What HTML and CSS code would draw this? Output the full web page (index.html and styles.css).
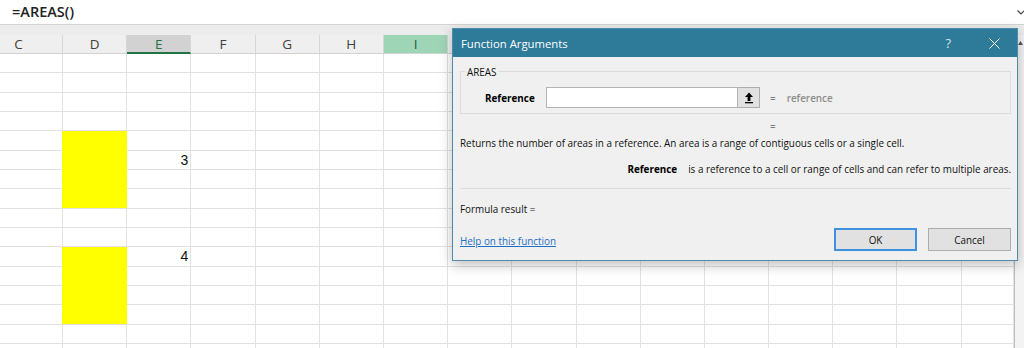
FILE: index.html
```html
<!DOCTYPE html>
<html lang="en">
<head>
<meta charset="utf-8">
<title>Function Arguments</title>
<link rel="stylesheet" href="styles.css">
</head>
<body>
<div class="app">
  <div class="fbar">
    <span class="formula">=AREAS()</span>
    <svg class="chev" viewBox="0 0 8 5" width="8" height="5"><polyline points="0.5,0.5 4,4 7.5,0.5" fill="none" stroke="#444" stroke-width="1.2"/></svg>
  </div>
  <div class="gap"></div>
  <div class="main">
    <div class="sheet">
      <div class="hd first">C</div><div class="hd">D</div><div class="hd sel">E</div><div class="hd">F</div><div class="hd">G</div><div class="hd">H</div><div class="hd act">I</div><div class="hd"></div><div class="hd"></div><div class="hd"></div><div class="hd"></div><div class="hd"></div><div class="hd"></div><div class="hd"></div><div class="hd"></div><div class="hd"></div>
      <i></i><i></i><i></i><i></i><i></i><i></i><i></i><i></i><i></i><i></i><i></i><i></i><i></i><i></i><i></i><i></i>
      <i></i><i></i><i></i><i></i><i></i><i></i><i></i><i></i><i></i><i></i><i></i><i></i><i></i><i></i><i></i><i></i>
      <i></i><i></i><i></i><i></i><i></i><i></i><i></i><i></i><i></i><i></i><i></i><i></i><i></i><i></i><i></i><i></i>
      <i></i><i></i><i></i><i></i><i></i><i></i><i></i><i></i><i></i><i></i><i></i><i></i><i></i><i></i><i></i><i></i>
      <i class="yl"></i><i class="y"></i><i></i><i></i><i></i><i></i><i></i><i></i><i></i><i></i><i></i><i></i><i></i><i></i><i></i><i></i>
      <i class="yl"></i><i class="y"></i><i class="n">3</i><i></i><i></i><i></i><i></i><i></i><i></i><i></i><i></i><i></i><i></i><i></i><i></i><i></i>
      <i class="yl"></i><i class="y"></i><i></i><i></i><i></i><i></i><i></i><i></i><i></i><i></i><i></i><i></i><i></i><i></i><i></i><i></i>
      <i class="yl"></i><i class="y yb"></i><i></i><i></i><i></i><i></i><i></i><i></i><i></i><i></i><i></i><i></i><i></i><i></i><i></i><i></i>
      <i></i><i></i><i></i><i></i><i></i><i></i><i></i><i></i><i></i><i></i><i></i><i></i><i></i><i></i><i></i><i></i>
      <i></i><i></i><i></i><i></i><i></i><i></i><i></i><i></i><i></i><i></i><i></i><i></i><i></i><i></i><i></i><i></i>
      <i class="yl"></i><i class="y"></i><i class="n">4</i><i></i><i></i><i></i><i></i><i></i><i></i><i></i><i></i><i></i><i></i><i></i><i></i><i></i>
      <i class="yl"></i><i class="y"></i><i></i><i></i><i></i><i></i><i></i><i></i><i></i><i></i><i></i><i></i><i></i><i></i><i></i><i></i>
      <i class="yl"></i><i class="y"></i><i></i><i></i><i></i><i></i><i></i><i></i><i></i><i></i><i></i><i></i><i></i><i></i><i></i><i></i>
      <i class="yl"></i><i class="y yb"></i><i></i><i></i><i></i><i></i><i></i><i></i><i></i><i></i><i></i><i></i><i></i><i></i><i></i><i></i>
      <i></i><i></i><i></i><i></i><i></i><i></i><i></i><i></i><i></i><i></i><i></i><i></i><i></i><i></i><i></i><i></i>
      <i></i><i></i><i></i><i></i><i></i><i></i><i></i><i></i><i></i><i></i><i></i><i></i><i></i><i></i><i></i><i></i>
    </div>
    <div class="vscroll">
      <svg class="uparrow" viewBox="0 0 5 4" width="5" height="4"><polygon points="2.5,0 5,4 0,4" fill="#555"/></svg>
    </div>
  </div>

  <div class="dialog">
    <div class="dtitle">
      <span class="dtext">Function Arguments</span>
      <span class="help">?</span>
      <svg class="close" viewBox="0 0 11 11" width="11" height="11"><path d="M0.5 0.5 L10.5 10.5 M10.5 0.5 L0.5 10.5" stroke="#fff" stroke-width="1" fill="none"/></svg>
    </div>
    <div class="dbody">
      <fieldset class="group">
        <legend>AREAS</legend>
        <div class="argrow">
          <span class="arglabel">Reference</span>
          <span class="argin"></span>
          <span class="argbtn"><svg viewBox="0 0 10 12" width="10" height="12"><path d="M5 0.5 L9 5 L6.4 5 L6.4 9 L3.6 9 L3.6 5 L1 5 Z" fill="#000"/><rect x="1" y="10" width="8" height="1.3" fill="#000"/></svg></span>
          <span class="eq">=</span>
          <span class="argval">reference</span>
        </div>
      </fieldset>
      <div class="resline">=</div>
      <div class="desc">Returns the number of areas in a reference. An area is a range of contiguous cells or a single cell.</div>
      <div class="argdesc"><b>Reference</b><span>is a reference to a cell or range of cells and can refer to multiple areas.</span></div>
      <div class="sep"></div>
      <div class="fresult">Formula result =</div>
      <div class="foot">
        <span class="helplink">Help on this function</span>
        <button class="btn ok">OK</button>
        <button class="btn">Cancel</button>
      </div>
    </div>
  </div>
</div>
</body>
</html>
```
FILE: styles.css
```css
* { box-sizing: border-box; margin: 0; padding: 0; }
html, body { width: 1024px; height: 348px; overflow: hidden; background: #fff; }
body { font-family: "Open Sans", "Noto Sans", sans-serif; }
.app { position: relative; width: 1024px; height: 348px; }

.fbar {
  height: 25px;
  border-bottom: 1px solid #d4d4d4;
  background: #fff;
  display: flex;
  align-items: center;
  padding-left: 12px;
}
.formula { flex: 1; font-size: 14.5px; font-weight: 600; color: #222; line-height: 24px; }
.chev { display: block; transform: translateX(1px); }

.gap { height: 10px; background: #ececec; }

.main { display: flex; height: 313px; }
.sheet {
  flex: 1;
  display: grid;
  grid-template-columns: 63px repeat(14, 64.2px) 1fr;
  grid-template-rows: 19px repeat(16, 19.333px);
  overflow: hidden;
}
.sheet > * {
  border-right: 1px solid #e1e1e1;
  border-bottom: 1px solid #e1e1e1;
  font-style: normal;
}
.hd {
  background: #efefef;
  border-right-color: #d6d6d6 !important;
  border-bottom-color: #d2d2d2 !important;
  text-align: center;
  font-size: 13.5px;
  line-height: 18px;
  color: #404040;
}
.hd.first { padding-right: 25px; }
.hd.sel { background: #d2d2d2; color: #217346; border-bottom: 2px solid #217346 !important; }
.hd.act { background: #9fd5b7; color: #1e5a3a; }
.y { background: #ff0; border-right-color: #ff0 !important; border-bottom-color: #ff0 !important; }
.y.yb { border-bottom-color: #e1e1e1 !important; }
.yl { border-right-color: #ff0 !important; }
.n {
  font-family: "Liberation Sans", Arial, sans-serif;
  font-size: 14px;
  line-height: 19px;
  text-align: right;
  padding-right: 2px;
  color: #111;
}
.vscroll {
  width: 10px;
  border-left: 1px solid #bdbdbd;
  background: #f3f3f3;
  padding: 6px 0 0 3px;
}
.uparrow { display: block; }

/* dialog */
.dialog {
  position: absolute;
  left: 452px;
  top: 28px;
  width: 566px;
  border: 1px solid #4f8cab;
  background: #f0f0f0;
  box-shadow: 0 4px 12px rgba(0, 0, 0, 0.25);
  font-size: 9.9px;
  color: #111;
}
.dtitle {
  height: 28px;
  background: #2d7a99;
  display: flex;
  align-items: center;
  padding: 0 17px 0 8px;
  color: #fff;
}
.dtext { flex: 1; font-size: 11.3px; }
.help { font-size: 13px; color: #d5e4ec; margin-right: 38px; }
.close { display: block; }

.dbody { padding: 6px 6px 9px 7px; }
.group { border: 1px solid #dcdcdc; padding: 8px 0 5px 0; }
.group legend { margin-left: 4px; padding: 2px 2px 0; line-height: 14px; }
.argrow { display: flex; align-items: center; height: 21px; padding-left: 24px; }
.arglabel { width: 61px; font-weight: 700; color: #000; }
.argin { width: 192px; height: 21px; background: #fff; border: 1px solid #b4b4b4; }
.argbtn {
  width: 22px; height: 21px;
  background: #e1e1e1;
  border: 1px solid #adadad;
  border-left: none;
  display: flex; align-items: center; justify-content: center;
}
.argbtn svg { display: block; }
.eq { margin-left: 10px; }
.argval { margin-left: 11px; color: #8c8c8c; font-weight: 600; }

.resline { margin-top: 5px; padding-left: 310px; line-height: 14px; }
.desc { margin-top: 2px; line-height: 16px; }
.argdesc { margin-top: 10px; line-height: 16px; display: flex; justify-content: flex-end; gap: 11px; }
.argdesc b { color: #000; }
.sep { margin-top: 11px; height: 1px; background: #dcdcdc; }
.fresult { margin-top: 12px; line-height: 16px; }
.foot { margin-top: 11px; display: flex; align-items: center; height: 23px; }
.helplink { flex: 1; color: #1f6fc5; text-decoration: underline; padding-top: 2px; }
.btn {
  width: 83px; height: 23px;
  margin-left: 11px;
  font: inherit;
  color: #111;
  background: #e1e1e1;
  border: 1px solid #adadad;
}
.btn.ok { border: 2px solid #3f90df; }
```
